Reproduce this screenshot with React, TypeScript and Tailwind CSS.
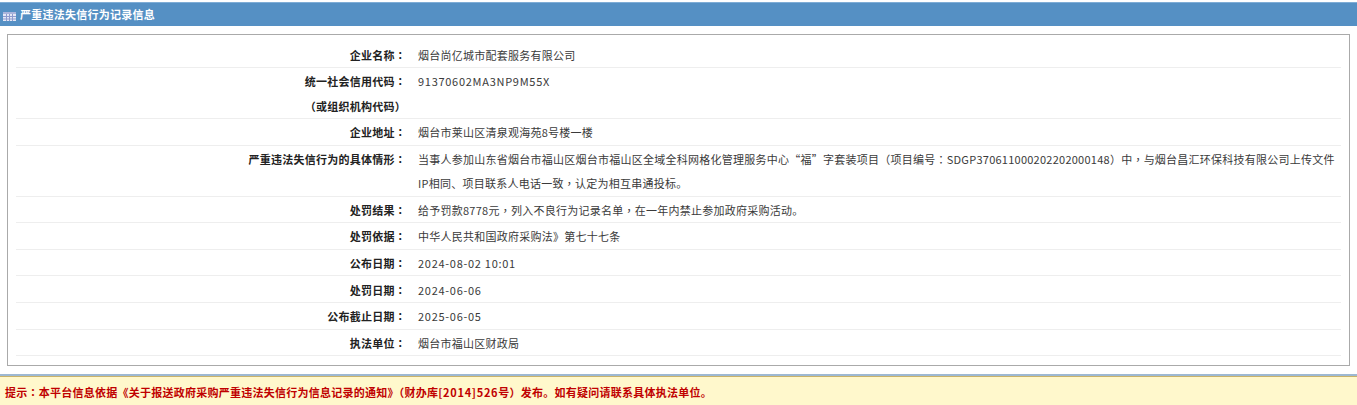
import type { ReactNode } from "react";

const rows: { label: string[]; value: string[]; latin?: boolean }[] = [
  { label: ["企业名称："], value: ["烟台尚亿城市配套服务有限公司"] },
  { label: ["统一社会信用代码：", "（或组织机构代码）"], value: ["91370602MA3NP9M55X"], latin: true },
  { label: ["企业地址："], value: ["烟台市莱山区清泉观海苑8号楼一楼"] },
  {
    label: ["严重违法失信行为的具体情形："],
    value: [
      "当事人参加山东省烟台市福山区烟台市福山区全域全科网格化管理服务中心“福”字套装项目（项目编号：SDGP370611000202202000148）中，与烟台昌汇环保科技有限公司上传文件",
      "IP相同、项目联系人电话一致，认定为相互串通投标。",
    ],
  },
  { label: ["处罚结果："], value: ["给予罚款8778元，列入不良行为记录名单，在一年内禁止参加政府采购活动。"] },
  { label: ["处罚依据："], value: ["中华人民共和国政府采购法》第七十七条"] },
  { label: ["公布日期："], value: ["2024-08-02 10:01"], latin: true },
  { label: ["处罚日期："], value: ["2024-06-06"], latin: true },
  { label: ["公布截止日期："], value: ["2025-06-05"], latin: true },
  { label: ["执法单位："], value: ["烟台市福山区财政局"] },
];

// Centred full-width punctuation comes from the TC cut of the font.
function Txt({ children }: { children: string }): ReactNode {
  return children.split(/([：，（）“”])/).map((part, i) =>
    i % 2 ? (
      <span key={i} className="font-['Noto_Sans_CJK_TC',sans-serif]">
        {part}
      </span>
    ) : (
      part
    ),
  );
}

export default function App() {
  return (
    <div className="h-[405px] w-[1357px] overflow-hidden bg-white font-['Noto_Sans_CJK_SC',sans-serif] text-[11px] leading-[24.4px] tracking-[0.25px] text-[#3a3a3a]">
      <div className="pt-[2px]">
        <div className="flex h-[24px] items-center border-t border-[#7fadd6] bg-[#5590c4] pl-[3px]">
          <svg width="13" height="9" viewBox="0 0 13 9" className="mt-[4px]">
            <rect width="13" height="9" fill="#e4e8f6" />
            <rect width="13" height="2" fill="#a9b4dc" />
            <path d="M0 4.5h13M0 7h13M3.5 2v7M6.5 2v7M9.5 2v7" stroke="#8e9bcf" strokeWidth="1" />
          </svg>
          <span className="ml-[4px] font-bold text-white">严重违法失信行为记录信息</span>
        </div>
      </div>
      <div className="mx-[7px] mt-[8px] h-[332px] border border-[#aaaaaa] px-[8px] pt-[6.4px]">
        {rows.map((r, i) => (
          <div key={i} className="flex border-b border-[#eeeeee] pt-[1.2px]">
            <div className="w-[390px] shrink-0 text-right font-bold text-[#222]">
              {r.label.map((l) => (
                <div key={l}>
                  <Txt>{l}</Txt>
                </div>
              ))}
            </div>
            <div className={`ml-[12px] min-w-0 whitespace-nowrap ${r.latin ? "tracking-[0.72px]" : ""}`}>
              {r.value.map((v) => (
                <div key={v}>
                  <Txt>{v}</Txt>
                </div>
              ))}
            </div>
          </div>
        ))}
      </div>
      <div className="mt-[8px] h-[2px] bg-[#9db8d2]" />
      <div className="h-[30px] border-t border-[#c9b26a] bg-[#fff8cc] pl-[5px] pt-[3px] font-bold leading-[25.4px] text-[#c00000]">
        <Txt>提示：本平台信息依据《关于报送政府采购严重违法失信行为信息记录的通知》（财办库</Txt>
        <span className="tracking-[0.7px]">[2014]526</span>
        <Txt>号）发布。如有疑问请联系具体执法单位。</Txt>
      </div>
    </div>
  );
}
